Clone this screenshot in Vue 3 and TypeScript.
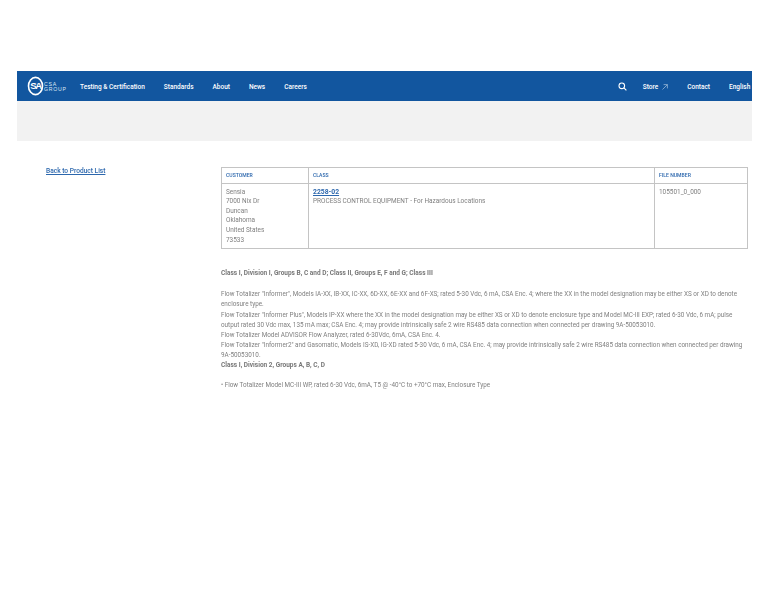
<script setup lang="ts">
const mainNav: string[] = ['Testing & Certification', 'Standards', 'About', 'News', 'Careers']
const address: string[] = ['Sensia', '7000 Nix Dr', 'Duncan', 'Oklahoma', 'United States', '73533']
const lines: string[] = [
  'Flow Totalizer "Informer", Models IA-XX, IB-XX, IC-XX, 6D-XX, 6E-XX and 6F-XS; rated 5-30 Vdc, 6 mA, CSA Enc. 4; where the XX in the model designation may be either XS or XD to denote enclosure type.',
  'Flow Totalizer "Informer Plus", Models IP-XX where the XX in the model designation may be either XS or XD to denote enclosure type and Model MC-III EXP; rated 6-30 Vdc, 6 mA; pulse output rated 30 Vdc max, 135 mA max; CSA Enc. 4; may provide intrinsically safe 2 wire RS485 data connection when connected per drawing 9A-50053010.',
  'Flow Totalizer Model ADVISOR Flow Analyzer, rated 6-30Vdc, 6mA, CSA Enc. 4.',
  'Flow Totalizer "Informer2" and Gasomatic, Models IS-XD, IG-XD rated 5-30 Vdc, 6 mA, CSA Enc. 4; may provide intrinsically safe 2 wire RS485 data connection when connected per drawing 9A-50053010.',
]
</script>

<template>
  <div class="page">
    <header class="bar">
      <div class="logo">
        <svg width="17" height="20" viewBox="0 0 17 20" class="mark">
          <ellipse cx="8.5" cy="10" rx="7" ry="8.6" fill="none" stroke="#fff" stroke-width="1.6" />
          <text x="3.2" y="13.4" class="mark-sa">SA</text>
        </svg>
        <div class="wordmark"><span>CSA</span><span>GROUP</span></div>
      </div>
      <nav class="nav-main">
        <a v-for="item in mainNav" :key="item">{{ item }}</a>
      </nav>
      <div class="nav-side">
        <svg class="search" width="9" height="9" viewBox="0 0 9 9">
          <circle cx="3.8" cy="3.8" r="2.8" fill="none" stroke="#fff" stroke-width="1.1" />
          <path d="M5.9 5.9 8.4 8.4" stroke="#fff" stroke-width="1.2" />
        </svg>
        <a class="store">Store
          <svg width="6" height="6" viewBox="0 0 6 6"><path d="M.5 5.5 5.3.7M1.6.6h3.8v3.8" fill="none" stroke="#c5d6ea" stroke-width=".6" /></svg>
        </a>
        <a>Contact</a>
        <a class="lang">English</a>
      </div>
    </header>
    <div class="band"></div>
    <main class="content">
      <aside class="side"><a class="back">Back to Product List</a></aside>
      <section class="detail">
        <table>
          <thead>
            <tr><th class="c1">CUSTOMER</th><th class="c2">CLASS</th><th class="c3">FILE NUMBER</th></tr>
          </thead>
          <tbody>
            <tr>
              <td><div v-for="l in address" :key="l">{{ l }}</div></td>
              <td><a class="code">2258-02</a><div>PROCESS CONTROL EQUIPMENT - For Hazardous Locations</div></td>
              <td>105501_0_000</td>
            </tr>
          </tbody>
        </table>
        <h4 class="h-first">Class I, Division I, Groups B, C and D; Class II, Groups E, F and G; Class III</h4>
        <div class="body">
          <p v-for="l in lines" :key="l">{{ l }}</p>
        </div>
        <h4 class="h-second">Class I, Division 2, Groups A, B, C, D</h4>
        <p class="last">• Flow Totalizer Model MC-III WP, rated 6-30 Vdc, 6mA, T5 @ -40°C to +70°C max, Enclosure Type</p>
      </section>
    </main>
  </div>
</template>

<style>
html, body { background: #fff; }
</style>

<style scoped>
.page {
  width: 735px;
  margin: 0 0 0 17px;
  padding-top: 71px;
  height: 523px;
  overflow: hidden;
  font-family: Roboto, "Liberation Sans", sans-serif;
  color: #808080;
  font-size: 6.33px;
  filter: blur(0.3px);
}
.bar {
  height: 30px;
  background: #12569f;
  display: flex;
  align-items: center;
  color: #fff;
  white-space: nowrap;
  overflow: hidden;
  padding-top: 1px;
  box-sizing: border-box;
}
.logo { display: flex; align-items: center; margin-left: 9.5px; width: 53.5px; flex: none; gap: .5px; }
.mark { flex: none; margin-top: -1px; }
.mark-sa { font: 700 9.6px "Liberation Sans", sans-serif; fill: #fff; letter-spacing: -1.4px; }
.wordmark { display: flex; flex-direction: column; font: 400 5.2px/4.8px "Liberation Sans", sans-serif; letter-spacing: .75px; color: #dfe8f3; flex: none; }
.nav-main { display: flex; gap: 19px; font-weight: 500; font-size: 6.5px; }
.nav-side { margin-left: auto; display: flex; align-items: center; gap: 19px; font-weight: 500; font-size: 6.5px; }
.search { margin-right: -3px; margin-top: -1px; }
.store { display: inline-flex; align-items: center; gap: 4px; }
.lang { width: 23px; overflow: hidden; }
.band { height: 40px; background: #f2f2f2; }
.content { display: flex; align-items: flex-start; padding-top: 26px; }
.side { width: 204px; flex: none; padding-left: 29px; box-sizing: border-box; }
.back { color: #2c67ad; text-decoration: underline; font-size: 6.6px; font-weight: 500; display: block; }
.detail { width: 527px; flex: none; }
table { width: 527px; border-collapse: collapse; table-layout: fixed; color: #808080; line-height: 9.65px; font-size: 6.45px; }
th, td { border: 1px solid #c4c4c4; text-align: left; vertical-align: top; padding: 0 4px; }
th { height: 15px; vertical-align: middle; color: #2c67ad; font-size: 5.1px; font-weight: 500; }
td { padding-top: 3.5px; padding-bottom: 3px; }
.c1 { width: 78px; }
.c3 { width: 84px; }
.code { color: #2c67ad; font-weight: 700; text-decoration: underline; font-size: 6.8px; display: block; }
h4 { margin: 0; font-size: 6.5px; font-weight: 700; color: #777; line-height: 10px; }
.h-first { margin-top: 19px; }
.body { margin-top: 11px; line-height: 10.05px; }
.body p { margin: 0; }
.h-second { margin-top: 0; }
.last { margin: 10px 0 0; line-height: 10px; }
</style>
